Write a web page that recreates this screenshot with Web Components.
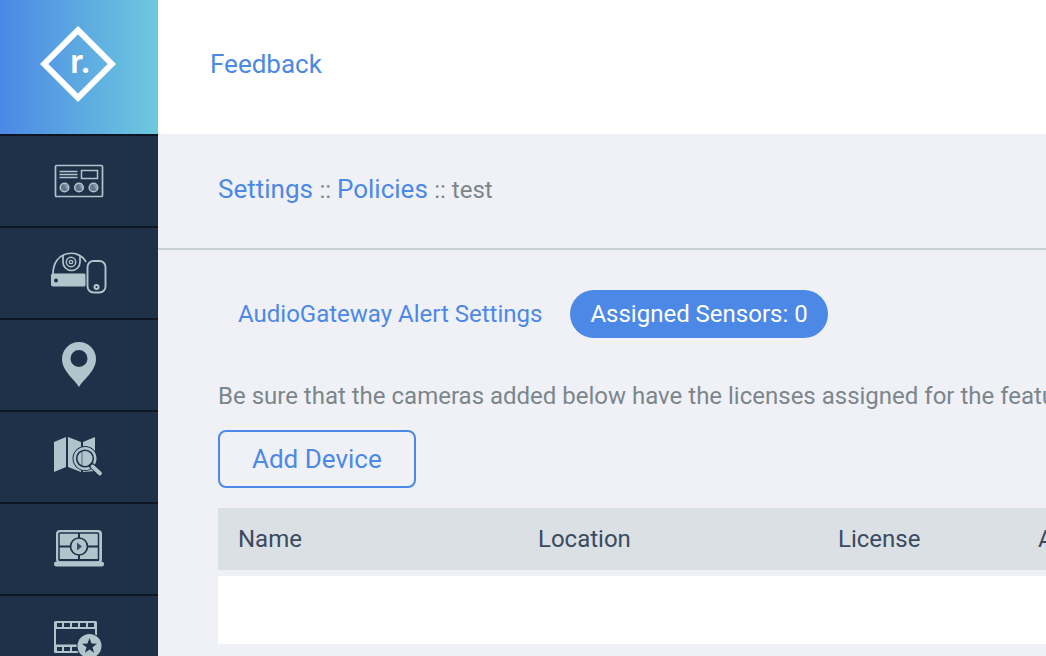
<!DOCTYPE html>
<html lang="en">
<head>
<meta charset="utf-8">
<meta name="viewport" content="width=device-width, initial-scale=1">
<title>Policies - Assigned Sensors</title>
<style>
  :root {
    --blue: #4c88e6;
    --ink: #3a4a60;
    --muted: #7b868c;
    --page: #f0f1f6;
    --line: #c8d0d6;
    --nav: #1f3149;
    --nav-line: #0d1622;
    --icon: #b0c4cb;
  }
  body { margin: 0; font: 24px/28px Roboto, sans-serif; color: var(--muted); background: var(--page); }
</style>
</head>
<body>
<admin-app></admin-app>

<template id="admin-app">
  <style>
    :host { display: flex; height: 100vh; overflow: hidden; }
    main { flex: 1; min-width: 0; overflow: hidden; }
    section { padding: 40px 0 0 60px; }
    nav { display: flex; gap: 8px; }
    p { margin: 44px 0 20px; white-space: nowrap; }
  </style>
  <side-nav></side-nav>
  <main>
    <top-bar><link-text href="#feedback">Feedback</link-text></top-bar>
    <crumb-bar>
      <link-text href="#settings">Settings</link-text> :: <link-text href="#policies">Policies</link-text> :: test
    </crumb-bar>
    <section>
      <nav aria-label="Policy sections">
        <tab-pill href="#alerts">AudioGateway Alert Settings</tab-pill>
        <tab-pill href="#sensors" active>Assigned Sensors: 0</tab-pill>
      </nav>
      <p>Be sure that the cameras added below have the licenses assigned for the features</p>
      <outline-button>Add Device</outline-button>
      <device-table></device-table>
    </section>
  </main>
</template>

<template id="side-nav">
  <style>
    :host { display: block; flex: 0 0 158px; background: var(--nav); }
    a { box-sizing: border-box; display: grid; place-items: center; height: 92px; border-top: 2px solid var(--nav-line); color: var(--icon); }
    svg { display: block; width: 60px; height: 56px; overflow: visible; }
    .s { fill: none; stroke: currentColor; stroke-width: 2; }
    .f { fill: currentColor; }
    .d { fill: var(--nav); }
    .k { fill: none; stroke: var(--nav); stroke-width: 2; }
  </style>
  <brand-logo></brand-logo>
  <nav aria-label="Main">
    <a href="#dashboard" aria-label="Dashboard"><svg viewBox="-0.500 -0.500 60 56">
      <rect class="s" x="6" y="12" width="47" height="31" rx="1" style="stroke-width:1.700"/>
      <path class="s" d="M10 18h18M10 21h18M10 24h18" style="stroke-width:1.500"/>
      <rect class="s" x="32" y="17" width="16" height="8" style="stroke-width:1.500"/>
      <g class="s" style="stroke-width:1.500;fill:#60758a"><circle cx="15" cy="34" r="4.300"/><circle cx="29.500" cy="34" r="4.300"/><circle cx="44" cy="34" r="4.300"/></g>
      <path class="f" d="M14 30l5 3-1 4zM29 30l5 3-1 4zM43 30l5 3-1 4z" opacity=".5"/>
    </svg></a>
    <a href="#devices" aria-label="Devices"><svg viewBox="0 -1 60 56">
      <path class="s" d="M4 28C4 4 30 2 37 16" style="stroke-width:1.700"/>
      <path class="s" d="M14 9V16a8.500 8.500 0 0 0 17 0V9" style="stroke-width:1.700"/>
      <circle class="s" cx="22" cy="16" r="4.700" style="stroke-width:1.500"/><circle class="s" cx="22" cy="16" r="1.700" style="stroke-width:1.300"/>
      <rect class="f" x="2" y="27.500" width="35" height="13" rx="2"/><circle class="d" cx="7" cy="34.500" r="2"/>
      <rect class="d" x="36.500" y="13.500" width="22" height="34" rx="7"/>
      <rect class="s" x="38.500" y="15" width="18" height="31.500" rx="6" style="stroke-width:1.900"/>
      <circle class="s" cx="47.500" cy="41" r="2" style="stroke-width:2"/>
    </svg></a>
    <a href="#locations" aria-label="Locations"><svg viewBox="0 0 60 56">
      <path class="f" fill-rule="evenodd" d="M30 50C26 43 13 34 13 22a17 17 0 0 1 34 0C47 34 34 43 30 50zM30 13a8.500 8.500 0 1 0 0 17 8.500 8.500 0 0 0 0-17z"/>
    </svg></a>
    <a href="#maps" aria-label="Map search"><svg viewBox="0 0 60 56">
      <path class="f" d="M5 13l12-5v30L5 43zM19 8l13 5v30l-13-5zM34 13l12-5v34l-12 1z"/>
      <circle class="d" cx="36" cy="29.500" r="12.500"/>
      <circle class="s" cx="36" cy="29.500" r="10.300" style="stroke-width:2.400"/>
      <circle class="f" cx="36" cy="29.500" r="7.500"/>
      <path class="k" d="M33 22v15" style="stroke-width:1" opacity=".6"/>
      <path class="k" d="M43 37l8 7" stroke-linecap="round" style="stroke-width:6"/>
      <path class="s" d="M43.500 37.500l7.500 7" stroke-linecap="round" style="stroke-width:3.800"/>
    </svg></a>
    <a href="#live" aria-label="Live video"><svg viewBox="0 -1 60 56">
      <rect class="f" x="7" y="8" width="46" height="33" rx="4"/>
      <rect class="k" x="10" y="11" width="39.500" height="27.500" rx="1" style="stroke-width:1.500"/>
      <path class="k" d="M30 11v28M10 24.500h40"/>
      <path class="k" d="M10 38h40"/>
      <circle cx="30" cy="24.500" r="8.500" fill="currentColor" style="stroke:var(--nav);stroke-width:1.700"/>
      <path class="d" d="M28 20.500l5 4-5 4z" opacity=".8"/>
      <rect class="f" x="5" y="39.500" width="50" height="5" rx="2.500"/>
    </svg></a>
    <a href="#clips" aria-label="Saved clips"><svg viewBox="0 -1 60 56">
      <rect class="f" x="5" y="7" width="43" height="32" rx="1.500"/>
      <path class="d" d="M7 15h39v15.500H7zM8 9h5v4H8zM15 9h6v4h-6zM23 9h6v4h-6zM31 9h6v4h-6zM39 9h6v4h-6zM8 33h5v4H8zM15 33h6v4h-6zM23 33h6v4h-6z"/>
      <circle class="d" cx="40.500" cy="32" r="13"/><circle class="f" cx="40.500" cy="32" r="12"/>
      <path class="d" d="M40.500 24l2 5.500 5.500.2-4.500 3.500 1.600 5.600-4.600-3.200-4.600 3.200 1.600-5.600-4.500-3.500 5.500-.2z"/>
    </svg></a>
  </nav>
</template>

<template id="brand-logo">
  <style>
    :host { display: grid; place-items: center; height: 134px; background: linear-gradient(90deg, #4c88e6, #6dc9dd); color: #fff; }
    a { color: inherit; text-decoration: none; padding: 0 2px 6px 0; }
    svg { display: block; width: 76px; height: 76px; }
    text { font: 700 34px Lato, sans-serif; }
  </style>
  <a href="#home" aria-label="Home"><svg viewBox="0 0 76 76">
    <path d="M38 4.200L71.800 38 38 71.800 4.200 38z" fill="none" stroke="#fff" stroke-width="6"/>
    <text x="40" y="47" fill="#fff" text-anchor="middle">r.</text>
  </svg></a>
</template>

<template id="top-bar">
  <style>
    :host { display: flex; align-items: center; box-sizing: border-box; height: 134px; padding: 0 52px 6px; background: #fff; }
  </style>
  <slot></slot>
</template>

<template id="crumb-bar">
  <style>
    :host { display: block; box-sizing: border-box; height: 116px; padding: 40px 60px 0; line-height: 30px; border-bottom: 2px solid var(--line); }
  </style>
  <slot></slot>
</template>

<template id="link-text">
  <style>
    :host { font-size: 26px; line-height: 30px; }
    a { color: var(--blue); text-decoration: none; }
  </style>
  <a><slot></slot></a>
</template>

<template id="tab-pill">
  <style>
    :host { display: block; flex: none; }
    a { display: block; padding: 10px 20px; border-radius: 24px; color: var(--blue); text-decoration: none; white-space: nowrap; }
    :host([active]) a { background: var(--blue); color: #fff; }
  </style>
  <a><slot></slot></a>
</template>

<template id="outline-button">
  <style>
    :host { display: block; }
    button { display: block; height: 58px; padding: 0 32px; border: 2px solid var(--blue); border-radius: 8px; background: transparent; color: var(--blue); font: 26px/30px Roboto, sans-serif; }
  </style>
  <button type="button"><slot></slot></button>
</template>

<template id="device-table">
  <style>
    :host { display: block; margin-top: 20px; }
    table { width: 1200px; table-layout: fixed; border-spacing: 0; }
    th { height: 62px; padding: 0 20px; box-sizing: border-box; background: #dbe0e4; color: var(--ink); font-weight: 400; text-align: left; }
    .wide { width: 300px; }
    .mid { width: 200px; }
    td { height: 68px; padding: 0; background: #fff; border-top: 6px solid var(--page); }
  </style>
  <table>
    <thead><tr><th class="wide">Name</th><th class="wide">Location</th><th class="mid">License</th><th>Actions</th></tr></thead>
    <tbody><tr><td colspan="4"></td></tr></tbody>
  </table>
</template>

<script>
  class TemplateElement extends HTMLElement {
    connectedCallback() {
      if (this.shadowRoot) return;
      const root = this.attachShadow({ mode: "open" });
      root.append(document.getElementById(this.localName).content.cloneNode(true));
      const link = root.querySelector("a:not([href])");
      if (link) link.href = this.getAttribute("href") || "#";
      if (link && this.hasAttribute("active")) link.setAttribute("aria-current", "page");
    }
  }
  for (const name of ["link-text", "tab-pill", "outline-button", "device-table", "brand-logo", "top-bar", "crumb-bar", "side-nav", "admin-app"]) {
    customElements.define(name, class extends TemplateElement {});
  }
</script>
</body>
</html>
